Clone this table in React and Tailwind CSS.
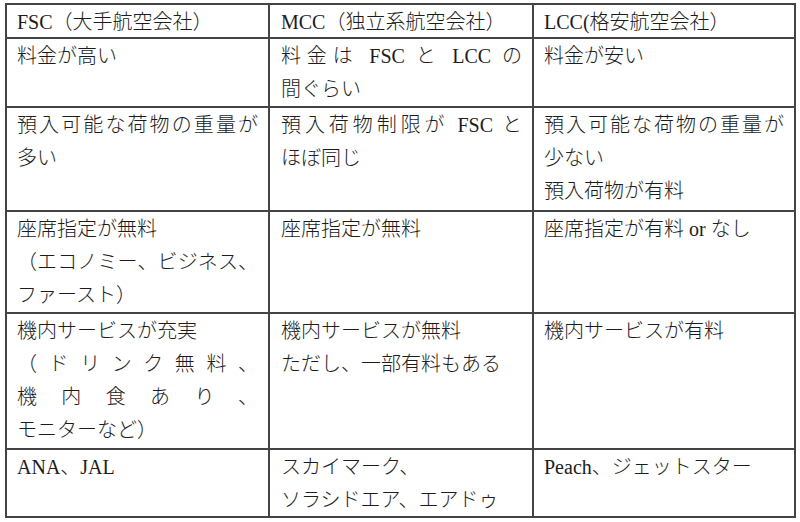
const rows = [
  {
    h: "h-[34px]",
    cells: [
      [{ t: "FSC（大手航空会社）" }],
      [{ t: "MCC（独立系航空会社）" }],
      [{ t: "LCC(格安航空会社）" }],
    ],
  },
  {
    h: "h-[69px]",
    cells: [
      [{ t: "料金が高い" }],
      [{ t: "料金は FSC と LCC の", j: true }, { t: "間ぐらい" }],
      [{ t: "料金が安い" }],
    ],
  },
  {
    h: "h-[104px]",
    cells: [
      [{ t: "預入可能な荷物の重量が", j: true }, { t: "多い" }],
      [{ t: "預入荷物制限が FSC と", j: true }, { t: "ほぼ同じ" }],
      [{ t: "預入可能な荷物の重量が", j: true }, { t: "少ない" }, { t: "預入荷物が有料" }],
    ],
  },
  {
    h: "h-[102px]",
    cells: [
      [{ t: "座席指定が無料" }, { t: "（エコノミー、ビジネス、", j: true }, { t: "ファースト）" }],
      [{ t: "座席指定が無料" }],
      [{ t: "座席指定が有料 or なし" }],
    ],
  },
  {
    h: "h-[136px]",
    cells: [
      [
        { t: "機内サービスが充実" },
        { t: "（ドリンク無料、", j: true },
        { t: "機内食あり、", j: true },
        { t: "モニターなど）" },
      ],
      [{ t: "機内サービスが無料" }, { t: "ただし、一部有料もある" }],
      [{ t: "機内サービスが有料" }],
    ],
  },
  {
    h: "h-[68px]",
    cells: [
      [{ t: "ANA、JAL" }],
      [{ t: "スカイマーク、" }, { t: "ソラシドエア、エアドゥ" }],
      [{ t: "Peach、ジェットスター" }],
    ],
  },
];

const colWidths = ["w-[263px]", "w-[264px]", "w-[262px]"];
const colPad = ["pl-[10px] pr-[10px]", "pl-[11px] pr-[10px]", "pl-[10px] pr-[10px]"];

export default function App() {
  return (
    <div
      className="w-[800px] h-[522px] bg-white pt-[3px] pl-[5px] text-[#1c1c1c]"
      style={{ fontFamily: '"Liberation Serif", "Noto Sans CJK JP", serif' }}
    >
      <div className="w-[791px] border-l-2 border-t-2 border-[#444]">
        {rows.map((row, ri) => (
          <div key={ri} className={`flex ${row.h}`}>
            {row.cells.map((cell, ci) => (
              <div
                key={ci}
                className={`${colWidths[ci]} ${colPad[ci]} border-r-2 border-b-2 border-[#444] pt-[1px] text-[20px] leading-[33px] font-light`}
              >
                {cell.map((line, li) => (
                  <div
                    key={li}
                    className={
                      line.j
                        ? "whitespace-nowrap text-justify [text-align-last:justify]"
                        : "whitespace-nowrap"
                    }
                  >
                    {line.t}
                  </div>
                ))}
              </div>
            ))}
          </div>
        ))}
      </div>
    </div>
  );
}
